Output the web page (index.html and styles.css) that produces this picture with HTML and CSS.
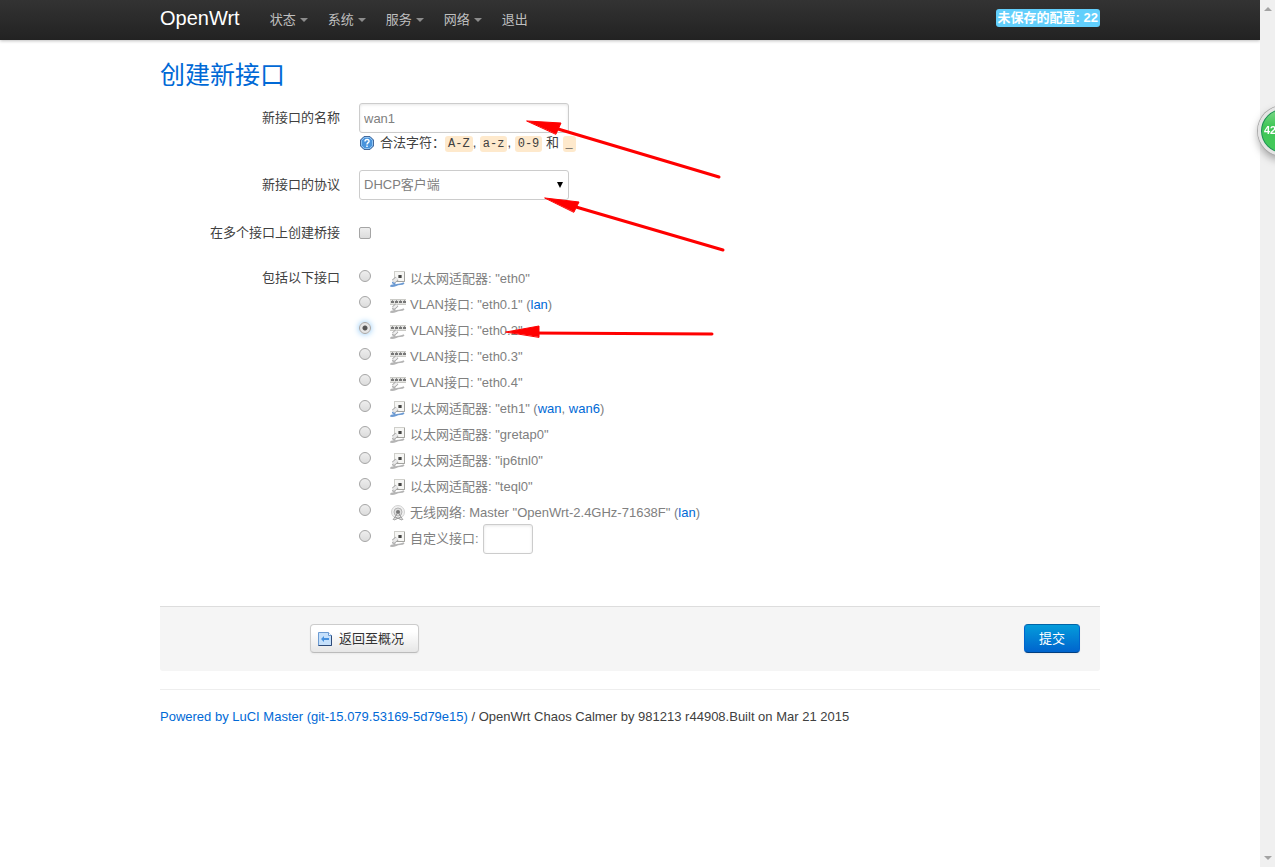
FILE: index.html
```html
<!DOCTYPE html>
<html lang="zh-cn">
<head>
    <meta charset="UTF-8">
    <meta name="viewport" content="width=device-width, initial-scale=1.0">
    <title>OpenWrt - 创建新接口 - LuCI</title>
    <link rel="stylesheet" href="styles.css">
</head>
<body>
    <!-- icons -->
    <svg class="sprite" width="0" height="0" aria-hidden="true">
        <symbol id="icon-eth" viewBox="0 0 16 16">
            <rect x="4.5" y="0.5" width="10" height="10" fill="#f6f6f4" stroke="#cfcfca"/>
            <path d="M14.500 1v9.500H7" fill="none" stroke="#a3a39f"/>
            <rect x="8" y="4" width="4" height="3" fill="#8a8a86"/>
            <rect x="9" y="4" width="2" height="3" fill="#444"/>
            <path d="M7 7.500L3.500 10.500" stroke="#999" stroke-width="4.500"/>
            <path d="M7 7.500L3.500 10.500" stroke="#e8e8e8" stroke-width="3"/>
            <path d="M3 11c-1 1.500 2.500 1 1.500 2.500S1 14 1 15c3 .5 5-1 7-1.500s4 0 6-1.500" fill="none" stroke="currentColor" stroke-width="1.700"/>
        </symbol>
        <symbol id="icon-vlan" viewBox="0 0 16 16">
            <rect x="0" y="2" width="16" height="6" fill="#e4e4e1"/>
            <path d="M0 2.500h16M0 7.500h16" stroke="#cacac6"/>
            <path d="M1 5h3M5 5h3M9 5h3M13 5h3" stroke="#777" stroke-width="2"/>
            <path d="M2 3.500h1M6 3.500h1M10 3.500h1M14 3.500h1" stroke="#999"/>
            <path d="M7 8L3.500 11" stroke="#999" stroke-width="4"/>
            <path d="M7 8L3.500 11" stroke="#eee" stroke-width="2.500"/>
            <path d="M3 11c-1 1.500 2.500 1 1.500 2.500S1 14 1 15c3 .5 5-1 7-1.500s4 0 6-1.500" fill="none" stroke="currentColor" stroke-width="1.700"/>
        </symbol>
        <symbol id="icon-wifi" viewBox="0 0 16 16">
            <circle cx="8" cy="7" r="6.500" fill="#f0f0f0" stroke="#d2d2d2"/>
            <circle cx="8" cy="7" r="4" fill="#dedede" stroke="#b4b4b4"/>
            <circle cx="8" cy="7" r="2" fill="#777"/>
            <path d="M7.500 8L3 15M8.500 8L13 15M5 12l7 3M11 12l-7 3" fill="none" stroke="#999"/>
        </symbol>
    </svg>

    <div class="page">
        <header class="topbar">
            <div class="container topbar-inner">
                <a class="brand" href="#">OpenWrt</a>
                <nav class="menu">
                    <a class="dropdown" href="#">状态</a>
                    <a class="dropdown" href="#">系统</a>
                    <a class="dropdown" href="#">服务</a>
                    <a class="dropdown" href="#">网络</a>
                    <a href="#">退出</a>
                </nav>
                <a class="changes" href="#">未保存的配置: 22</a>
            </div>
        </header>

        <main class="container content">
            <h2>创建新接口</h2>
            <form>
                <div class="row">
                    <label class="title" for="name">新接口的名称</label>
                    <div class="field">
                        <input class="text" type="text" id="name" value="wan1">
                        <div class="help">
                            <svg width="14" height="14" viewBox="1 1 14 14" aria-hidden="true">
                                <path d="M5 1.500h6L14.500 5v6L11 14.500H5L1.500 11V5z" fill="#4a94dc" stroke="#46699a"/>
                                <path d="M5.500 2.500h5L13.500 5.500v5l-3 3h-5l-3-3v-5z" fill="none" stroke="#8fc4f2"/>
                                <path d="M6 6.500c0-3 4.500-2.500 4 0C9.700 7.700 8 7.800 8 9.500M8 10.500v1.500" fill="none" stroke="#fff" stroke-width="1.500"/>
                            </svg>
                            <span>合法字符：<code>A-Z</code>, <code>a-z</code>, <code>0-9</code> 和 <code>_</code></span>
                        </div>
                    </div>
                </div>
                <div class="row">
                    <label class="title" for="proto">新接口的协议</label>
                    <div class="field">
                        <div class="select-wrap">
                            <select class="text" id="proto">
                                <option>DHCP客户端</option>
                            </select>
                        </div>
                    </div>
                </div>
                <div class="row">
                    <label class="title" for="bridge">在多个接口上创建桥接</label>
                    <div class="field check">
                        <input class="box" type="checkbox" id="bridge">
                    </div>
                </div>
                <div class="row">
                    <span class="title list-title" id="ifaces">包括以下接口</span>
                    <ul class="ifaces" role="radiogroup" aria-labelledby="ifaces">
                        <li><input class="radio" type="radio" name="if" id="if0"><svg class="icon up"><use href="#icon-eth"/></svg><label for="if0">以太网适配器: "eth0"</label></li>
                        <li><input class="radio" type="radio" name="if" id="if1"><svg class="icon"><use href="#icon-vlan"/></svg><label for="if1">VLAN接口: "eth0.1" (<a href="#">lan</a>)</label></li>
                        <li><input class="radio" type="radio" name="if" id="if2" checked><svg class="icon"><use href="#icon-vlan"/></svg><label for="if2">VLAN接口: "eth0.2"</label></li>
                        <li><input class="radio" type="radio" name="if" id="if3"><svg class="icon"><use href="#icon-vlan"/></svg><label for="if3">VLAN接口: "eth0.3"</label></li>
                        <li><input class="radio" type="radio" name="if" id="if4"><svg class="icon"><use href="#icon-vlan"/></svg><label for="if4">VLAN接口: "eth0.4"</label></li>
                        <li><input class="radio" type="radio" name="if" id="if5"><svg class="icon up"><use href="#icon-eth"/></svg><label for="if5">以太网适配器: "eth1" (<a href="#">wan</a>, <a href="#">wan6</a>)</label></li>
                        <li><input class="radio" type="radio" name="if" id="if6"><svg class="icon"><use href="#icon-eth"/></svg><label for="if6">以太网适配器: "gretap0"</label></li>
                        <li><input class="radio" type="radio" name="if" id="if7"><svg class="icon"><use href="#icon-eth"/></svg><label for="if7">以太网适配器: "ip6tnl0"</label></li>
                        <li><input class="radio" type="radio" name="if" id="if8"><svg class="icon"><use href="#icon-eth"/></svg><label for="if8">以太网适配器: "teql0"</label></li>
                        <li><input class="radio" type="radio" name="if" id="if9"><svg class="icon"><use href="#icon-wifi"/></svg><label for="if9">无线网络: Master "OpenWrt-2.4GHz-71638F" (<a href="#">lan</a>)</label></li>
                        <li><input class="radio" type="radio" name="if" id="if10"><svg class="icon"><use href="#icon-eth"/></svg><label for="if10">自定义接口:</label><input class="text custom" type="text" aria-label="自定义接口"></li>
                    </ul>
                </div>
                <div class="actions">
                    <button class="btn" type="button">
                        <svg width="16" height="16" viewBox="0 0 16 16" aria-hidden="true">
                            <path d="M1.500 1.500h10l3 3v10h-13z" fill="#c5e0fb" stroke="#6c9bd2"/>
                            <path d="M14.500 4v10.500h-13" fill="none" stroke="#2d4a78"/>
                            <path d="M11.500 1.500v3h3" fill="#fff" stroke="#6c9bd2"/>
                            <path d="M4 8l3-3v2h5v2H7v2z" fill="#4590de"/>
                        </svg>
                        返回至概况
                    </button>
                    <button class="btn primary" type="submit">提交</button>
                </div>
            </form>

            <footer>
                <a href="#">Powered by LuCI Master (git-15.079.53169-5d79e15)</a> / OpenWrt Chaos Calmer by 981213 r44908.Built on Mar 21 2015
            </footer>

            <!-- red arrows over the form -->
            <svg class="arrows" width="600" height="280" viewBox="0 0 600 280" aria-hidden="true">
                <g fill="red" stroke="red" stroke-width="3" stroke-linecap="round">
                    <path d="M398 49L559 97"/>
                    <path d="M367 41l34 2-5 11z" stroke-width="1"/>
                    <path d="M416 127L563 170"/>
                    <path d="M385 118l34 4-5 10z" stroke-width="1"/>
                    <path d="M370 253L552 254"/>
                    <path d="M346 252l33-6v11z" stroke-width="1"/>
                </g>
            </svg>
        </main>
    </div>

    <div class="scrollbar" aria-hidden="true">
        <svg width="8" height="4" viewBox="0 0 8 4"><path d="M0 4l4-4 4 4z" fill="#a3a3a3"/></svg>
        <svg width="8" height="4" viewBox="0 0 8 4"><path d="M0 0l4 4 4-4z" fill="#a3a3a3"/></svg>
    </div>
    <div class="float-ball">42</div>
</body>
</html>
```
FILE: styles.css
```css
* {
    box-sizing: border-box;
}

body {
    display: flex;
    margin: 0;
    min-height: 100vh;
    background: #fff;
    color: #404040;
    font: 13px/18px "Liberation Sans", "Noto Sans CJK SC", sans-serif;
}

a {
    color: #0069d6;
    text-decoration: none;
}

.sprite {
    position: absolute;
}

.page {
    flex: 1;
    min-width: 0;
}

.container {
    max-width: 940px;
    margin: 0 auto;
}

/* top bar */
.topbar {
    background: linear-gradient(#333, #222);
    box-shadow: 0 1px 3px rgba(0, 0, 0, 0.25);
}

.topbar-inner {
    display: flex;
    align-items: center;
    height: 40px;
}

.brand {
    margin-right: 20px;
    padding-bottom: 4px;
    color: #fff;
    font-size: 20px;
}

.menu {
    display: flex;
    flex: 1;
}

.menu a {
    display: flex;
    align-items: center;
    gap: 4px;
    padding: 0 10px;
    color: #bfbfbf;
}

.dropdown::after {
    content: "";
    border: 4px solid transparent;
    border-top-color: #8c8c8c;
    border-bottom: 0;
}

.changes {
    margin-bottom: 4px;
    padding: 0 2px;
    border-radius: 3px;
    background: #62cffc;
    color: #fff;
    font-weight: bold;
}

/* form */
.content {
    position: relative;
    padding-top: 17px;
}

h2 {
    margin: 0 0 10px;
    color: #0069d6;
    font-size: 25px;
    font-weight: normal;
    line-height: 36px;
}

.row {
    display: grid;
    grid-template-columns: 180px 1fr;
    column-gap: 19px;
    margin-bottom: 18px;
}

.title {
    line-height: 30px;
    text-align: right;
}

.list-title {
    line-height: 24px;
}

.text {
    display: block;
    width: 210px;
    height: 30px;
    padding: 4px;
    border: 1px solid #ccc;
    border-radius: 3px;
    background: #fff;
    color: #808080;
    font: inherit;
    box-shadow: inset 0 1px 3px rgba(0, 0, 0, 0.1);
}

.help {
    display: flex;
    align-items: center;
    gap: 6px;
    height: 19px;
    padding-left: 1px;
}

code {
    padding: 1px 3px;
    border-radius: 3px;
    background: #fee9cc;
    font: 12px/16px "Liberation Mono", monospace;
}

.select-wrap {
    position: relative;
    width: 210px;
}

select.text {
    appearance: none;
    box-shadow: none;
}

.select-wrap::after {
    content: "";
    position: absolute;
    top: 12px;
    right: 6px;
    border: 3px solid transparent;
    border-top: 6px solid #000;
    border-bottom: 0;
}

.check {
    display: flex;
    align-items: center;
}

.box,
.radio {
    appearance: none;
    flex: none;
    width: 12px;
    height: 12px;
    margin: 0;
    border: 1px solid #a5a5a5;
    border-radius: 2px;
    background: linear-gradient(#eee, #dcdcdc);
}

.radio {
    align-self: flex-start;
    margin: 4px 19px 0 0;
    border-radius: 50%;
}

.radio:checked {
    background: radial-gradient(circle, #555 0 2px, #e6e6e6 3px);
    box-shadow: 0 0 6px #7fc0f5;
}

.ifaces {
    margin: 0;
    padding: 0;
    color: #808080;
    list-style: none;
}

.ifaces li {
    display: flex;
    align-items: center;
    height: 26px;
}

.icon {
    flex: none;
    width: 16px;
    height: 16px;
    margin-right: 4px;
    color: #b4b4b4;
}

.icon.up {
    color: #6c9ad2;
}

.custom {
    width: 50px;
    margin-left: 4px;
}

.actions {
    display: flex;
    justify-content: space-between;
    margin-top: 54px;
    padding: 17px 20px 18px 150px;
    border-top: 1px solid #ddd;
    border-radius: 0 0 3px 3px;
    background: #f5f5f5;
}

.btn {
    display: flex;
    align-items: center;
    gap: 6px;
    height: 29px;
    padding: 0 14px 0 6px;
    border: 1px solid #ccc;
    border-bottom-color: #bbb;
    border-radius: 4px;
    background: linear-gradient(#fff 25%, #e6e6e6);
    color: #333;
    font: inherit;
    box-shadow: 0 1px 2px rgba(0, 0, 0, 0.05);
    cursor: pointer;
}

.primary {
    padding: 0 14px;
    border-color: #0064a8 #0064cd #003f81;
    background: linear-gradient(#049cdb, #0064cd);
    color: #fff;
}

footer {
    margin-top: 18px;
    padding-top: 18px;
    border-top: 1px solid #eee;
}

.arrows {
    position: absolute;
    top: 40px;
    left: 0;
    pointer-events: none;
}

/* right edge */
.scrollbar {
    display: flex;
    flex-direction: column;
    align-items: center;
    justify-content: space-between;
    width: 15px;
    height: 100vh;
    padding: 7px 0;
    background: #f0f0f0;
}

.float-ball {
    position: fixed;
    top: 106px;
    right: -33px;
    width: 50px;
    height: 50px;
    padding-left: 3px;
    border: 3px solid #e4e4e4;
    border-radius: 50%;
    background: linear-gradient(#7ed88a, #3fc656 40%, #45c95c);
    color: #fff;
    font-size: 11px;
    font-weight: bold;
    line-height: 42px;
    box-shadow: inset 0 0 0 1px #1f8a5a, 0 0 0 1px #aaa, 0 4px 8px rgba(0, 0, 0, 0.35);
}
```
